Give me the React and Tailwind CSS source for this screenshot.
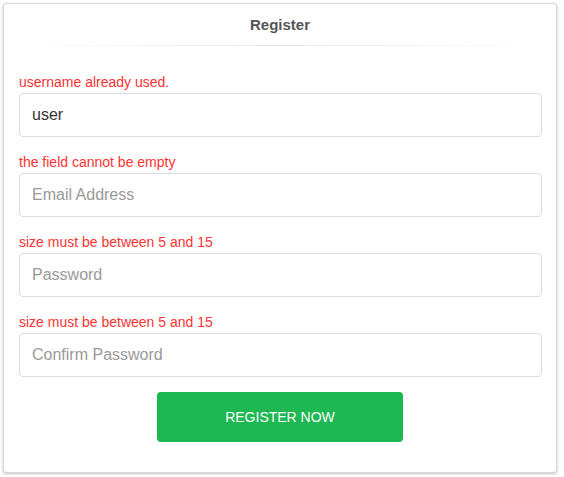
import { useState } from "react";

function Field({ error, type = "text", placeholder, defaultValue }) {
  return (
    <div className="mb-[15px]">
      <div className="text-[14px] leading-[20px] text-[#ff3333] mb-px">{error}</div>
      <input
        type={type}
        placeholder={placeholder}
        defaultValue={defaultValue}
        className="block w-full h-[44px] px-[12px] text-[16px] text-[#333] placeholder:text-[#999] border border-[#ddd] rounded-[4px] outline-none bg-white"
      />
    </div>
  );
}

export default function App() {
  const [sent, setSent] = useState(false);

  return (
    <div className="p-[3px] bg-white" style={{ fontFamily: '"Liberation Sans", Arial, sans-serif' }}>
      <div className="w-[554px] border border-[#d8d8d8] rounded-[3px] shadow-[0_1px_3px_rgba(0,0,0,0.25)] bg-white">
        {/* Header */}
        <div className="pt-[11px] px-[16px]">
          <h1 className="text-center text-[15px] leading-[20px] font-bold text-[#555]">Register</h1>
          <div className="mt-[10px] h-px bg-gradient-to-r from-transparent via-[#e6e6e6] to-transparent" />
        </div>

        {/* Form */}
        <form
          className="pl-[15px] pr-[14px] pt-[26px] pb-[30px]"
          onSubmit={(e) => {
            e.preventDefault();
            setSent(true);
          }}
        >
          <Field error="username already used." defaultValue="user" />
          <Field error="the field cannot be empty" placeholder="Email Address" />
          <Field error="size must be between 5 and 15" type="password" placeholder="Password" />
          <Field error="size must be between 5 and 15" type="password" placeholder="Confirm Password" />

          <div className="flex justify-center pr-px">
            <button
              type="submit"
              className="w-[246px] h-[50px] rounded-[4px] bg-[#1db851] text-white text-[14px] uppercase"
            >
              {sent ? "Register now" : "Register now"}
            </button>
          </div>
        </form>
      </div>
    </div>
  );
}
